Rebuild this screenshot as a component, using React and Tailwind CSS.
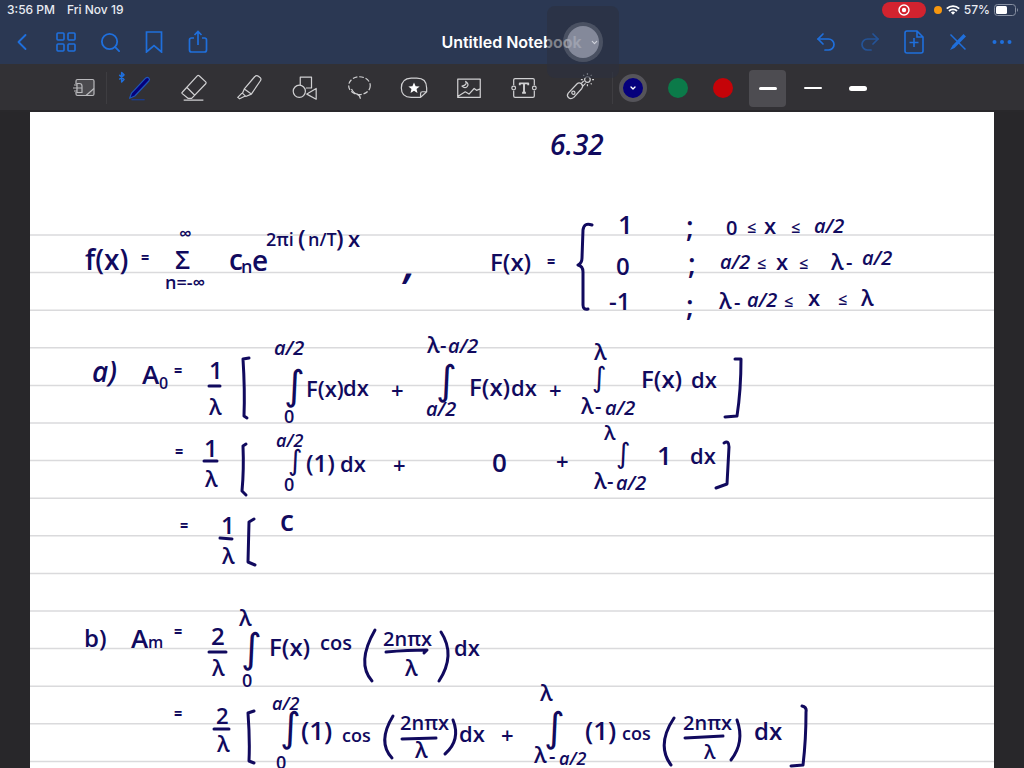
import { useState } from "react";
import {
  ChevronLeft,
  ChevronDown,
  LayoutGrid,
  Search,
  Undo2,
  Redo2,
} from "lucide-react";

const INK = "#110a5e";

// one word or symbol of ink: [text, x, baseline, size]
const words = [
  ["6.32", 550, 155, 28],

  // f(x) as a fourier series
  ["f(x)", 85, 270, 28],
  ["=", 141, 263, 14],
  ["∞", 179, 240, 18],
  ["Σ", 175, 269, 26],
  ["n=-∞", 165, 289, 18],
  ["c", 229, 270, 28],
  ["n", 241, 273, 18],
  ["e", 252, 271, 28],
  ["2πi", 266, 246, 18],
  ["(", 298, 247, 24],
  ["n/T", 308, 246, 18],
  [")", 336, 247, 24],
  ["x", 348, 247, 22],
  [",", 404, 278, 44],

  // F(x) piecewise
  ["F(x)", 490, 271, 24],
  ["=", 547, 267, 14],
  ["1", 618, 234, 26],
  [";", 686, 237, 28],
  ["0", 726, 235, 20],
  ["≤", 747, 233, 16],
  ["x", 764, 234, 22],
  ["≤", 791, 233, 16],
  ["a/2", 814, 233, 20],
  ["0", 616, 275, 24],
  [";", 688, 274, 28],
  ["a/2", 720, 269, 20],
  ["≤", 757, 269, 16],
  ["x", 776, 270, 22],
  ["≤", 799, 269, 16],
  ["λ", 831, 270, 22],
  ["-", 846, 269, 20],
  ["a/2", 862, 265, 20],
  ["-1", 609, 310, 24],
  [";", 686, 316, 28],
  ["λ", 719, 309, 22],
  ["-", 734, 309, 20],
  ["a/2", 747, 307, 20],
  ["≤", 784, 307, 16],
  ["x", 808, 306, 22],
  ["≤", 838, 305, 16],
  ["λ", 861, 306, 22],

  // a)
  ["a)", 92, 382, 28],
  ["A", 142, 384, 26],
  ["0", 159, 389, 16],
  ["=", 174, 376, 14],
  ["1", 209, 379, 24],
  ["λ", 209, 415, 22],
  ["a/2", 274, 355, 20],
  ["∫", 284, 399, 40],
  ["0", 284, 423, 18],
  ["F(x)", 306, 397, 22],
  ["dx", 343, 396, 22],
  ["+", 391, 398, 22],
  ["λ", 427, 353, 22],
  ["-", 440, 352, 20],
  ["a/2", 448, 353, 20],
  ["∫", 436, 394, 40],
  ["a/2", 426, 416, 20],
  ["F(x)", 469, 396, 24],
  ["dx", 511, 396, 22],
  ["+", 549, 398, 22],
  ["λ", 594, 360, 22],
  ["∫", 592, 387, 28],
  ["λ", 581, 414, 22],
  ["-", 595, 413, 20],
  ["a/2", 605, 415, 20],
  ["F(x)", 641, 388, 24],
  ["dx", 691, 388, 22],

  ["=", 175, 457, 14],
  ["1", 204, 457, 24],
  ["λ", 205, 487, 22],
  ["a/2", 276, 447, 18],
  ["∫", 288, 470, 28],
  ["0", 284, 491, 18],
  ["(1)", 306, 472, 24],
  ["dx", 340, 472, 22],
  ["+", 393, 473, 22],
  ["0", 492, 472, 26],
  ["+", 556, 469, 22],
  ["λ", 604, 440, 20],
  ["∫", 616, 463, 28],
  ["λ", 594, 489, 22],
  ["-", 607, 488, 20],
  ["a/2", 616, 490, 20],
  ["1", 657, 465, 26],
  ["dx", 690, 464, 22],

  ["=", 180, 531, 14],
  ["1", 221, 534, 24],
  ["λ", 222, 564, 22],
  ["c", 280, 531, 28],

  // b)
  ["b)", 84, 647, 24],
  ["A", 131, 648, 26],
  ["m", 148, 648, 16],
  ["=", 174, 637, 14],
  ["2", 211, 645, 24],
  ["λ", 212, 676, 22],
  ["λ", 239, 626, 22],
  ["∫", 241, 662, 40],
  ["0", 242, 687, 18],
  ["F(x)", 269, 656, 24],
  ["cos", 320, 650, 20],
  ["2nπx", 383, 646, 20],
  ["λ", 405, 676, 22],
  ["dx", 454, 656, 22],

  ["=", 174, 719, 14],
  ["2", 216, 724, 22],
  ["λ", 217, 752, 22],
  ["a/2", 272, 710, 18],
  ["∫", 280, 741, 40],
  ["0", 276, 769, 18],
  ["(1)", 301, 740, 26],
  ["cos", 342, 742, 18],
  ["2nπx", 400, 730, 20],
  ["λ", 415, 758, 22],
  ["dx", 459, 742, 22],
  ["+", 501, 743, 22],
  ["λ", 540, 701, 22],
  ["∫", 544, 741, 40],
  ["λ", 534, 763, 22],
  ["-", 549, 763, 20],
  ["a/2", 559, 765, 18],
  ["(1)", 585, 740, 26],
  ["cos", 622, 740, 18],
  ["2nπx", 683, 730, 20],
  ["λ", 704, 759, 20],
  ["dx", 754, 740, 24],
];

// fraction bars and the tall brackets round each expression
const strokes = [
  "M592 225Q584 222 583 230L582 258Q582 263 578 265Q583 266 583 272L583 305Q583 310 588 309",
  "M209 386H220",
  "M249 358L243 359Q245 390 244 416L247 418",
  "M735 359L741 359Q741 390 737 416L725 417",
  "M204 461H217",
  "M246 444L243 446Q244 470 242 491L246 495",
  "M724 443Q729 440 729 447L727 484L716 488",
  "M220 538L232 539",
  "M254 519L249 522L248 562L255 565",
  "M209 652H226",
  "M375 630Q356 663 372 681",
  "M386 652Q408 650 427 650L424 653",
  "M441 632Q456 655 439 681",
  "M214 729H229",
  "M254 711L248 713Q250 740 249 761L254 763",
  "M393 716Q377 742 392 758",
  "M402 739L436 738",
  "M453 720Q461 740 445 754",
  "M674 718Q656 745 671 765",
  "M685 738L723 736",
  "M737 720Q745 742 731 760",
  "M802 706Q807 707 806 712Q806 740 803 765L791 766",
];

const rules = Array.from({ length: 15 }, (_, i) => 235 + i * 37.6);

// the hand leans on some symbols and writes the rest upright
const inkStyle = (text) => {
  if (text === "∫") return "font-['DejaVu_Sans',sans-serif] font-normal italic";
  if (text.includes("a") || text === "," || text === "6.32") return "font-semibold italic";
  if (text === "=") return "font-extrabold";
  return "font-semibold";
};

const Ink = () => (
  <svg viewBox="30 112 964 656" className="block w-full" role="img" aria-label="Notes for 6.32">
    {rules.map((y) => (
      <line key={y} x1="30" x2="994" y1={y} y2={y} stroke="#dadadc" strokeWidth="1.5" />
    ))}
    <g fill={INK} className="font-['Open_Sans','DejaVu_Sans',sans-serif]">
      {words.map(([text, x, y, size], i) => (
        <text key={i} x={x} y={y} fontSize={size} className={inkStyle(text)}>
          {text}
        </text>
      ))}
    </g>
    <g fill="none" stroke={INK} strokeWidth="3" strokeLinecap="round" strokeLinejoin="round">
      {strokes.map((d) => (
        <path key={d} d={d} />
      ))}
    </g>
  </svg>
);

const StatusBar = () => (
  <div className="flex h-5 items-center justify-between pl-[7px] pr-[5px] text-[12px] font-medium text-[#e8ebf1]">
    <div className="flex gap-3">
      <span>3:56 PM</span>
      <span>Fri Nov 19</span>
    </div>
    <div className="flex items-center">
      <span className="mr-2 flex h-4 w-11 items-center justify-center rounded-lg bg-[#d2232f]">
        <svg viewBox="0 0 12 12" className="size-3">
          <circle cx="6" cy="6" r="5" fill="none" stroke="white" strokeWidth="1.4" />
          <circle cx="6" cy="6" r="2.2" fill="white" />
        </svg>
      </span>
      <span className="mr-1 size-2 rounded-full bg-[#f7970f]" />
      <svg viewBox="0 0 14 10" className="mr-1 h-[10px] w-[14px]" fill="none" stroke="white" strokeWidth="1.8">
        <path d="M.8 3.6a8.8 8.8 0 0 1 12.4 0M3 6a5.7 5.7 0 0 1 8 0" />
        <path d="M7 9.8 4.9 7.6a3 3 0 0 1 4.2 0z" fill="white" stroke="none" />
      </svg>
      <span className="mr-1">57%</span>
      <svg viewBox="0 0 25 12" className="h-3 w-[25px]">
        <rect x=".5" y=".5" width="21" height="11" rx="3" fill="none" stroke="#8790a2" />
        <rect x="2" y="2" width="11" height="8" rx="1.5" fill="white" />
        <path d="M23 4q2 2 0 4z" fill="#8790a2" />
      </svg>
    </div>
  </div>
);

const NavButton = ({ label, children, className = "" }) => (
  <button
    aria-label={label}
    className={"flex h-11 w-11 items-center justify-center text-[#1f6fdc] " + className}
  >
    {children}
  </button>
);

const NavBar = () => (
  <nav className="flex h-11 items-center justify-between">
    <div className="flex">
      <NavButton label="Back">
        <ChevronLeft size={28} strokeWidth={1.6} />
      </NavButton>
      <NavButton label="Thumbnails">
        <LayoutGrid size={24} strokeWidth={1.6} />
      </NavButton>
      <NavButton label="Search">
        <Search size={23} strokeWidth={1.9} />
      </NavButton>
      <NavButton label="Bookmark">
        <svg viewBox="0 0 18 22" className="h-[22px] w-[18px]" fill="none" stroke="currentColor" strokeWidth="1.7">
          <path d="M1.5 1h15v20L9 14.5 1.5 21z" />
        </svg>
      </NavButton>
      <NavButton label="Share">
        <svg viewBox="0 0 20 24" className="h-6 w-5" fill="none" stroke="currentColor" strokeWidth="1.7">
          <path d="M6 8H3.500Q1.500 8 1.500 10v10q0 2 2 2h13q2 0 2-2V10q0-2-2-2H14M10 15V1.500M6.500 5 10 1.500l3.500 3.500" />
        </svg>
      </NavButton>
    </div>

    <button className="relative flex items-center gap-2 pl-4 text-[16px] font-semibold text-white">
      Untitled Notebook
      {/* assistive touch */}
      <span className="pointer-events-none absolute -right-5 flex size-[72px] items-center justify-center rounded-lg bg-[#2b3040]/60">
        <span className="flex size-10 items-center justify-center rounded-full bg-white/15">
          <span className="size-8 rounded-full bg-[#a3a8b8]/65" />
        </span>
      </span>
      <ChevronDown size={9} strokeWidth={3} className="z-10 text-[#cfd2da]" />
    </button>

    <div className="flex">
      <NavButton label="Undo">
        <Undo2 size={24} strokeWidth={1.7} />
      </NavButton>
      <NavButton label="Redo" className="opacity-50">
        <Redo2 size={24} strokeWidth={1.7} />
      </NavButton>
      <NavButton label="Add page">
        <svg viewBox="0 0 20 24" className="h-6 w-5" fill="none" stroke="currentColor" strokeWidth="1.6">
          <path d="M3 1h10l6 6v14q0 2-2 2H3q-2 0-2-2V3q0-2 2-2zM13 1v6h6M10 8v9M5.500 12.500h9" />
        </svg>
      </NavButton>
      <NavButton label="Read only">
        <svg viewBox="0 0 18 18" className="size-[18px]" fill="none" stroke="currentColor" strokeWidth="1.5">
          <path d="M1.500 1.500l15 15" />
          <path d="M14.500 1 3.500 12.500 1 17l4.500-2L17 3.500z" fill="currentColor" stroke="none" />
        </svg>
      </NavButton>
      <NavButton label="More">
        <svg viewBox="0 0 20 4" className="h-1 w-5" fill="currentColor">
          <circle cx="2.500" cy="2" r="2" />
          <circle cx="10" cy="2" r="2" />
          <circle cx="17.500" cy="2" r="2" />
        </svg>
      </NavButton>
    </div>
  </nav>
);

const tools = [
  {
    name: "Pen",
    icon: (
      <>
        <path d="M-5 2l5 5-2.500 2.500v-10L0 2l-5 5" stroke="#1f6fdc" strokeWidth="1.600" />
        <path d="M8 28.500h14" stroke="#1b3d94" />
        <path d="M6 27l2-5.500L23 5.500q2-1.500 3.500 0t0 3L11.500 24.500z" fill="#05007c" stroke="#1e55b8" />
      </>
    ),
  },
  {
    name: "Eraser",
    icon: <path d="M3.500 20.500 19.500 3q1-1 2 0l7 6.500q1 1 0 2L13.500 27h-4L3.500 22q-.8-.7 0-1.500zM8.500 15.500l8 8M5 29h21" />,
  },
  {
    name: "Highlighter",
    icon: <path d="M11 17 22 4q2-2 4-.5l2 1.500q1.500 1.500 0 3.500L18.500 22.500zM11 17l-2 4.500 3.500 3.500 6-2.500M8.500 21.500 4 26l2 1.500 6-3" />,
  },
  {
    name: "Shapes",
    icon: (
      <>
        <path d="M12 13V4.500h12V16h-6M29 16.500v11.500l-10-5.500z" />
        <circle cx="11" cy="19.500" r="6.500" />
      </>
    ),
  },
  {
    name: "Lasso",
    icon: (
      <>
        <ellipse cx="16.500" cy="13.500" rx="11.500" ry="9.500" strokeDasharray="5 2" />
        <path d="M8 17q2 4.500 6 5.500 3 1 3.500 5" />
      </>
    ),
  },
  {
    name: "Elements",
    icon: (
      <>
        <path d="M23 26H13Q2.500 26 2.500 16T13 5.500h6q10.500 0 10.500 10.500v4zM23 26v-4q0-2 2-2h4.500" />
        <path d="m16 10 1.700 4 4.300.3-3.300 2.700 1 4.200-3.700-2.300-3.700 2.300 1-4.200-3.300-2.700 4.300-.3z" fill="white" stroke="none" />
      </>
    ),
  },
  {
    name: "Image",
    icon: (
      <>
        <path d="M4 6.500h24v19.500H4zM4 25l8-5 4 2.500 5.500-6 2.500 2 4-1.500" />
        <path d="M12.500 9q2 4-4 5 3 3 5.500.5t-1.500-5.500z" />
      </>
    ),
  },
  {
    name: "Text",
    icon: (
      <>
        <path d="M5 13V7.500Q5 6 6.500 6h19Q27 6 27 7.500V13M5 19v5.500Q5 26 6.500 26h19q1.500 0 1.500-1.500V19" />
        <circle cx="5" cy="16" r="2" />
        <circle cx="27" cy="16" r="2" />
        <path d="M11.500 13v-2h9v2M16 11v10M14 21h4" strokeWidth="2" />
      </>
    ),
  },
  {
    name: "Laser",
    icon: (
      <>
        <path d="m4.500 21.500 9.500-10q2-2 4.500 0 2.500 2.500.5 5l-8.500 9.500q-3 2.500-5.500.5-2.500-2.500-.5-5z" />
        <path d="m18.500 11 2.500-2.500M20 14l3-3" />
        <circle cx="10" cy="21" r="1.700" />
        <circle cx="25" cy="7" r="3" />
        <path d="M25 0v2M25 12v2M18 7h2M30 7h2M20.500 2l1 1M28.500 11l1 1M29.500 2l-1 1" />
      </>
    ),
  },
];

const swatches = [
  { name: "Green", dot: "bg-[#0b7a49]" },
  { name: "Red", dot: "bg-[#c50308]" },
];

const widths = [
  { name: "Medium stroke", bar: "h-[3px]" },
  { name: "Thin stroke", bar: "h-[2px]" },
  { name: "Thick stroke", bar: "h-[5px]" },
];

const ToolBar = () => {
  const [tool, setTool] = useState("Pen");
  const [width, setWidth] = useState("Medium stroke");

  return (
    <div className="flex h-12 items-center bg-[#323135] pl-16 shadow-[inset_0_-2px_0_#29282b]">
      <button aria-label="Zoom window" className="flex h-10 w-10 items-center justify-center">
        <svg viewBox="0 0 24 20" className="h-5 w-6" fill="none" stroke="#b9b9bc" strokeWidth="1.200">
          <path d="M4 6V3q0-1.500 1.500-1.500h15Q22 1.500 22 3v13q0 1.500-1.500 1.500h-15Q4 17.500 4 16v-2" fill="#4b4a4e" />
          <path d="M5 5.500h2.500Q10 5.500 10 8v6.500H5zM5 10h5M2 7h3M1 10h4M2 13h3M14 17.500l8-7" />
        </svg>
      </button>
      <span className="mr-1 ml-0.5 h-8 w-px bg-[#3e3d41]" />

      {tools.map(({ name, icon }) => (
        <button
          key={name}
          aria-label={name}
          aria-pressed={tool === name}
          onClick={() => setTool(name)}
          className="flex h-10 w-[55px] items-center justify-center"
        >
          <svg
            viewBox="0 0 32 32"
            className="size-[30px] overflow-visible"
            fill="none"
            stroke="#d0d0d2"
            strokeWidth="1.300"
            strokeLinejoin="round"
          >
            {icon}
          </svg>
        </button>
      ))}

      <span className="mr-px ml-1.5 h-8 w-px bg-[#3e3d41]" />
      <div className="flex items-center gap-2">
        <button aria-label="Navy" className="flex size-[37px] items-center justify-center">
          <span className="flex size-7 items-center justify-center rounded-full border-4 border-[#55545a] bg-[#05007c] text-white">
            <ChevronDown size={8} strokeWidth={4} />
          </span>
        </button>
        {swatches.map(({ name, dot }) => (
          <button key={name} aria-label={name} className="flex size-[37px] items-center justify-center">
            <span className={"size-5 rounded-full " + dot} />
          </button>
        ))}
        {widths.map(({ name, bar }) => (
          <button
            key={name}
            aria-label={name}
            aria-pressed={width === name}
            onClick={() => setWidth(name)}
            className={
              "flex size-[37px] items-center justify-center rounded-sm " + (width === name ? "bg-[#4d4c51]" : "")
            }
          >
            <span className={"w-[18px] rounded-full bg-white " + bar} />
          </button>
        ))}
      </div>
    </div>
  );
};

export default function App() {
  return (
    <div className="flex min-h-screen flex-col bg-[#28272a] font-['Inter',sans-serif]">
      <header className="bg-[#2b3853]">
        <StatusBar />
        <NavBar />
      </header>
      <ToolBar />
      <main className="mx-[30px] flex-1 bg-white">
        <Ink />
      </main>
    </div>
  );
}
